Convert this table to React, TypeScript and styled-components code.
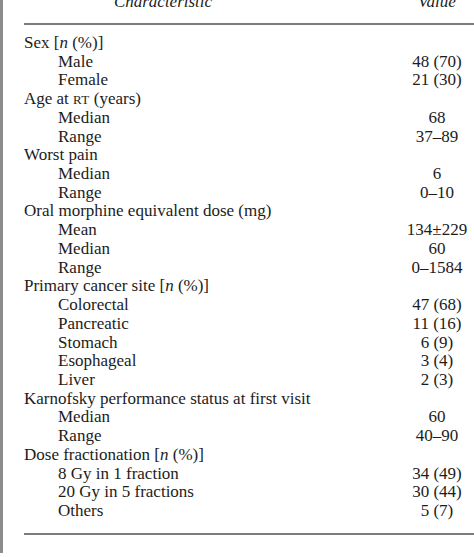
import React from 'react';
import styled, { createGlobalStyle } from 'styled-components';

const GlobalStyle = createGlobalStyle`
  html, body {
    margin: 0;
    padding: 0;
    background: #fff;
  }
  body {
    font-family: "Liberation Serif", "Times New Roman", serif;
    color: #1c1c1c;
  }
`;

const Page = styled.div`
  height: 553px;
  border-left: 3px solid #8c8c8c;
  padding-left: 21px;
  overflow: hidden;
  font-size: 17px;
`;

const Head = styled.div`
  margin-top: -8px;
  display: flex;
  line-height: 19px;
  padding-bottom: 12px;
  font-style: italic;
`;

const HeadCell = styled.div<{ $width: number }>`
  width: ${(p) => p.$width}px;
  text-align: center;
`;

const HeadSpacer = styled.div`
  flex: 1;
`;

const Rule = styled.div<{ $top: number; $bottom: number }>`
  height: 2px;
  background: #7c7c7c;
  margin: ${(p) => p.$top}px 0 ${(p) => p.$bottom}px;
`;

const Body = styled.div`
  display: grid;
  grid-template-columns: 1fr 74px;
  grid-auto-rows: 18.72px;
  line-height: 18.72px;
`;

const Label = styled.div<{ $indent?: boolean }>`
  padding-left: ${(p) => (p.$indent ? 34 : 0)}px;
  white-space: nowrap;
`;

const Value = styled.div`
  text-align: center;
  white-space: nowrap;
`;

const Em = styled.i`
  font-style: italic;
`;

const SmallCaps = styled.span`
  font-size: 13px;
  line-height: 0;
  letter-spacing: 0.3px;
`;

const Pct = () => (
  <>
    [<Em>n</Em> (%)]
  </>
);

type Row = { label: React.ReactNode; value?: string; indent?: boolean };

const rows: Row[] = [
  { label: <>Sex <Pct /></> },
  { label: 'Male', value: '48 (70)', indent: true },
  { label: 'Female', value: '21 (30)', indent: true },
  { label: <>Age at <SmallCaps>RT</SmallCaps> (years)</> },
  { label: 'Median', value: '68', indent: true },
  { label: 'Range', value: '37–89', indent: true },
  { label: 'Worst pain' },
  { label: 'Median', value: '6', indent: true },
  { label: 'Range', value: '0–10', indent: true },
  { label: 'Oral morphine equivalent dose (mg)' },
  { label: 'Mean', value: '134±229', indent: true },
  { label: 'Median', value: '60', indent: true },
  { label: 'Range', value: '0–1584', indent: true },
  { label: <>Primary cancer site <Pct /></> },
  { label: 'Colorectal', value: '47 (68)', indent: true },
  { label: 'Pancreatic', value: '11 (16)', indent: true },
  { label: 'Stomach', value: '6 (9)', indent: true },
  { label: 'Esophageal', value: '3 (4)', indent: true },
  { label: 'Liver', value: '2 (3)', indent: true },
  { label: 'Karnofsky performance status at first visit' },
  { label: 'Median', value: '60', indent: true },
  { label: 'Range', value: '40–90', indent: true },
  { label: <>Dose fractionation <Pct /></> },
  { label: '8 Gy in 1 fraction', value: '34 (49)', indent: true },
  { label: '20 Gy in 5 fractions', value: '30 (44)', indent: true },
  { label: 'Others', value: '5 (7)', indent: true },
];

const App: React.FC = () => {
  return (
    <>
      <GlobalStyle />
      <Page>
        <Head>
          <HeadCell $width={278}>Characteristic</HeadCell>
          <HeadSpacer />
          <HeadCell $width={74}>Value</HeadCell>
        </Head>
        <Rule $top={0} $bottom={9} />
        <Body>
          {rows.map((row, i) => (
            <React.Fragment key={i}>
              <Label $indent={row.indent}>{row.label}</Label>
              <Value>{row.value ?? ''}</Value>
            </React.Fragment>
          ))}
        </Body>
        <Rule $top={12} $bottom={0} />
      </Page>
    </>
  );
};

export default App;
